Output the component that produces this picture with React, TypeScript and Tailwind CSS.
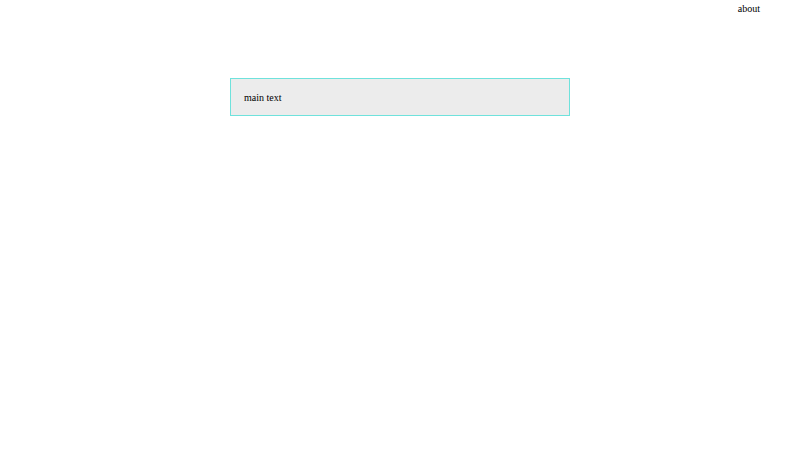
export default function App() {
  return (
    <div className="w-[800px] h-[450px] bg-white font-['Liberation_Serif',serif] text-black">
      <div className="flex justify-end pr-[40px] pt-[3px] h-[16px] text-[10px] leading-[12px]">
        <span>about</span>
      </div>
      <div className="flex justify-center mt-[62px]">
        <div className="w-[340px] h-[38px] flex items-center px-[13px] bg-[#ececec] border border-[#6fe2dc] text-[10px]">
          main text
        </div>
      </div>
    </div>
  )
}
